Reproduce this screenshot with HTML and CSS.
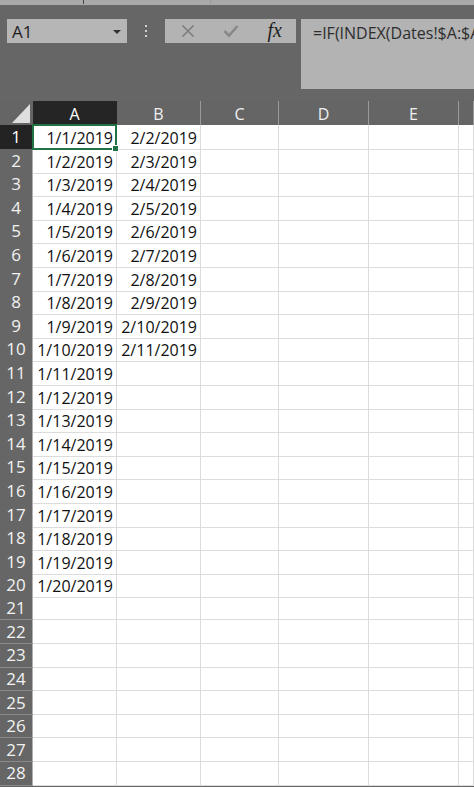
FILE: index.html
```html
<!DOCTYPE html>
<html>
<head>
<meta charset="utf-8">
<link rel="stylesheet" href="styles.css">
</head>
<body>
<div class="app">
  <div class="topstrip"><span class="tick"></span><span class="tick faint"></span></div>
  <div class="toolbar">
    <div class="namebox"><span>A1</span><span class="caret"></span></div>
    <div class="dots"><i></i><i></i><i></i></div>
    <div class="buttons">
      <svg class="ico" width="14" height="14" viewBox="0 0 14 14"><path d="M1.5 1.5 L12.5 12.5 M12.5 1.5 L1.5 12.5" stroke="#7b7b7b" stroke-width="1.5" fill="none"/></svg>
      <svg class="ico" width="16" height="14" viewBox="0 0 16 14"><path d="M1.5 7 L6 11.5 L14.5 2" stroke="#888" stroke-width="2.6" fill="none"/></svg>
      <span class="fx">fx</span>
    </div>
    <div class="formula"><span class="ftext">=IF(INDEX(Dates!$A:$A</span></div>
  </div>
  <div class="sheet">
    <div class="row head"><div class="corner"><span class="tri"></span></div><div class="ch active">A</div><div class="ch">B</div><div class="ch">C</div><div class="ch">D</div><div class="ch">E</div><div class="ch"></div></div>
    <div class="row"><div class="rh active">1</div><div class="c sel">1/1/2019<span class="handle"></span></div><div class="c">2/2/2019</div><div class="c"></div><div class="c"></div><div class="c"></div><div class="c"></div></div>
    <div class="row"><div class="rh">2</div><div class="c">1/2/2019</div><div class="c">2/3/2019</div><div class="c"></div><div class="c"></div><div class="c"></div><div class="c"></div></div>
    <div class="row"><div class="rh">3</div><div class="c">1/3/2019</div><div class="c">2/4/2019</div><div class="c"></div><div class="c"></div><div class="c"></div><div class="c"></div></div>
    <div class="row"><div class="rh">4</div><div class="c">1/4/2019</div><div class="c">2/5/2019</div><div class="c"></div><div class="c"></div><div class="c"></div><div class="c"></div></div>
    <div class="row"><div class="rh">5</div><div class="c">1/5/2019</div><div class="c">2/6/2019</div><div class="c"></div><div class="c"></div><div class="c"></div><div class="c"></div></div>
    <div class="row"><div class="rh">6</div><div class="c">1/6/2019</div><div class="c">2/7/2019</div><div class="c"></div><div class="c"></div><div class="c"></div><div class="c"></div></div>
    <div class="row"><div class="rh">7</div><div class="c">1/7/2019</div><div class="c">2/8/2019</div><div class="c"></div><div class="c"></div><div class="c"></div><div class="c"></div></div>
    <div class="row"><div class="rh">8</div><div class="c">1/8/2019</div><div class="c">2/9/2019</div><div class="c"></div><div class="c"></div><div class="c"></div><div class="c"></div></div>
    <div class="row"><div class="rh">9</div><div class="c">1/9/2019</div><div class="c">2/10/2019</div><div class="c"></div><div class="c"></div><div class="c"></div><div class="c"></div></div>
    <div class="row"><div class="rh">10</div><div class="c">1/10/2019</div><div class="c">2/11/2019</div><div class="c"></div><div class="c"></div><div class="c"></div><div class="c"></div></div>
    <div class="row"><div class="rh">11</div><div class="c">1/11/2019</div><div class="c"></div><div class="c"></div><div class="c"></div><div class="c"></div><div class="c"></div></div>
    <div class="row"><div class="rh">12</div><div class="c">1/12/2019</div><div class="c"></div><div class="c"></div><div class="c"></div><div class="c"></div><div class="c"></div></div>
    <div class="row"><div class="rh">13</div><div class="c">1/13/2019</div><div class="c"></div><div class="c"></div><div class="c"></div><div class="c"></div><div class="c"></div></div>
    <div class="row"><div class="rh">14</div><div class="c">1/14/2019</div><div class="c"></div><div class="c"></div><div class="c"></div><div class="c"></div><div class="c"></div></div>
    <div class="row"><div class="rh">15</div><div class="c">1/15/2019</div><div class="c"></div><div class="c"></div><div class="c"></div><div class="c"></div><div class="c"></div></div>
    <div class="row"><div class="rh">16</div><div class="c">1/16/2019</div><div class="c"></div><div class="c"></div><div class="c"></div><div class="c"></div><div class="c"></div></div>
    <div class="row"><div class="rh">17</div><div class="c">1/17/2019</div><div class="c"></div><div class="c"></div><div class="c"></div><div class="c"></div><div class="c"></div></div>
    <div class="row"><div class="rh">18</div><div class="c">1/18/2019</div><div class="c"></div><div class="c"></div><div class="c"></div><div class="c"></div><div class="c"></div></div>
    <div class="row"><div class="rh">19</div><div class="c">1/19/2019</div><div class="c"></div><div class="c"></div><div class="c"></div><div class="c"></div><div class="c"></div></div>
    <div class="row"><div class="rh">20</div><div class="c">1/20/2019</div><div class="c"></div><div class="c"></div><div class="c"></div><div class="c"></div><div class="c"></div></div>
    <div class="row"><div class="rh">21</div><div class="c"></div><div class="c"></div><div class="c"></div><div class="c"></div><div class="c"></div><div class="c"></div></div>
    <div class="row"><div class="rh">22</div><div class="c"></div><div class="c"></div><div class="c"></div><div class="c"></div><div class="c"></div><div class="c"></div></div>
    <div class="row"><div class="rh">23</div><div class="c"></div><div class="c"></div><div class="c"></div><div class="c"></div><div class="c"></div><div class="c"></div></div>
    <div class="row"><div class="rh">24</div><div class="c"></div><div class="c"></div><div class="c"></div><div class="c"></div><div class="c"></div><div class="c"></div></div>
    <div class="row"><div class="rh">25</div><div class="c"></div><div class="c"></div><div class="c"></div><div class="c"></div><div class="c"></div><div class="c"></div></div>
    <div class="row"><div class="rh">26</div><div class="c"></div><div class="c"></div><div class="c"></div><div class="c"></div><div class="c"></div><div class="c"></div></div>
    <div class="row"><div class="rh">27</div><div class="c"></div><div class="c"></div><div class="c"></div><div class="c"></div><div class="c"></div><div class="c"></div></div>
    <div class="row"><div class="rh">28</div><div class="c"></div><div class="c"></div><div class="c"></div><div class="c"></div><div class="c"></div><div class="c"></div></div>
  </div>
</div>
</body>
</html>
```
FILE: styles.css
```css
html, body {
  margin: 0;
  padding: 0;
  background: #666666;
}
.app {
  width: 474px;
  height: 787px;
  overflow: hidden;
  background: #666666;
  font-family: "Open Sans", "Liberation Sans", sans-serif;
}
.topstrip {
  height: 5px;
  background: #a9a9a9;
  position: relative;
}
.tick {
  position: absolute;
  left: 83px;
  top: 0;
  width: 1px;
  height: 4px;
  background: #444;
}
.tick.faint {
  left: 210px;
  background: #9a9a9a;
}
.toolbar {
  height: 96px;
  box-sizing: border-box;
  padding: 14px 0 0 7px;
  display: flex;
  align-items: flex-start;
  overflow: hidden;
}
.namebox {
  width: 120px;
  height: 24px;
  background: #b6b6b6;
  display: flex;
  align-items: center;
  justify-content: space-between;
  box-sizing: border-box;
  padding: 1px 6px 0 5px;
  font-size: 17px;
  color: #1e1e1e;
}
.caret {
  width: 0;
  height: 0;
  border-left: 4px solid transparent;
  border-right: 4px solid transparent;
  border-top: 4px solid #333;
}
.dots {
  width: 38px;
  height: 24px;
  display: flex;
  flex-direction: column;
  align-items: center;
  justify-content: center;
  gap: 3px;
}
.dots i {
  display: block;
  width: 2px;
  height: 2px;
  background: #d0d0d0;
}
.buttons {
  width: 131px;
  height: 24px;
  background: #b3b3b3;
  display: flex;
  align-items: center;
  box-sizing: border-box;
  padding: 0 14px 0 16px;
  justify-content: space-between;
}
.fx {
  font-family: "Liberation Serif", serif;
  font-style: italic;
  font-size: 20px;
  color: #1e1e1e;
  line-height: 1;
  margin-top: -2px;
}
.formula {
  margin-left: 5px;
  flex: 1;
  height: 70px;
  background: #b3b3b3;
  box-sizing: border-box;
  padding: 3px 0 0 12px;
  font-size: 16px;
  color: #2e2e2e;
  white-space: nowrap;
  overflow: hidden;
}
.sheet {
  background: #ffffff;
}
.row {
  display: grid;
  grid-template-columns: 33px 84px 84px 78px 90px 90px 15px;
  height: 23.6px;
}
.row.head {
  height: 24px;
  background: #656565;
}
.corner {
  position: relative;
  background: #656565;
}
.tri {
  position: absolute;
  right: 3px;
  bottom: 2px;
  width: 0;
  height: 0;
  border-left: 18px solid transparent;
  border-bottom: 19px solid #dedede;
}
.ch {
  box-sizing: border-box;
  border-right: 1px solid #9a9a9a;
  color: #f0f0f0;
  font-size: 16px;
  padding-top: 2px;
  display: flex;
  align-items: center;
  justify-content: center;
}
.ch.active {
  background: #252525;
  color: #ffffff;
  border-right-color: #252525;
}
.rh {
  box-sizing: border-box;
  background: #666666;
  border-right: 1px solid #b0b0b0;
  border-bottom: 1px solid #8a8a8a;
  color: #f2f2f2;
  font-size: 17px;
  line-height: 22px;
  display: flex;
  align-items: center;
  justify-content: center;
}
.rh.active {
  background: #232323;
  color: #ffffff;
}
.c {
  box-sizing: border-box;
  border-right: 1px solid #dcdcdc;
  border-bottom: 1px solid #dcdcdc;
  font-size: 16px;
  line-height: 22px;
  color: #111;
  display: flex;
  align-items: center;
  justify-content: flex-end;
  padding: 2px 3px 0 0;
  white-space: nowrap;
}
.c.sel {
  position: relative;
}
.c.sel::after {
  content: "";
  position: absolute;
  left: -1px;
  top: -1px;
  right: -1px;
  bottom: -1px;
  border: 2px solid #217346;
}
.handle {
  position: absolute;
  right: -3px;
  bottom: -3px;
  width: 5px;
  height: 5px;
  background: #217346;
  border: 1px solid #fff;
  z-index: 2;
}
```
